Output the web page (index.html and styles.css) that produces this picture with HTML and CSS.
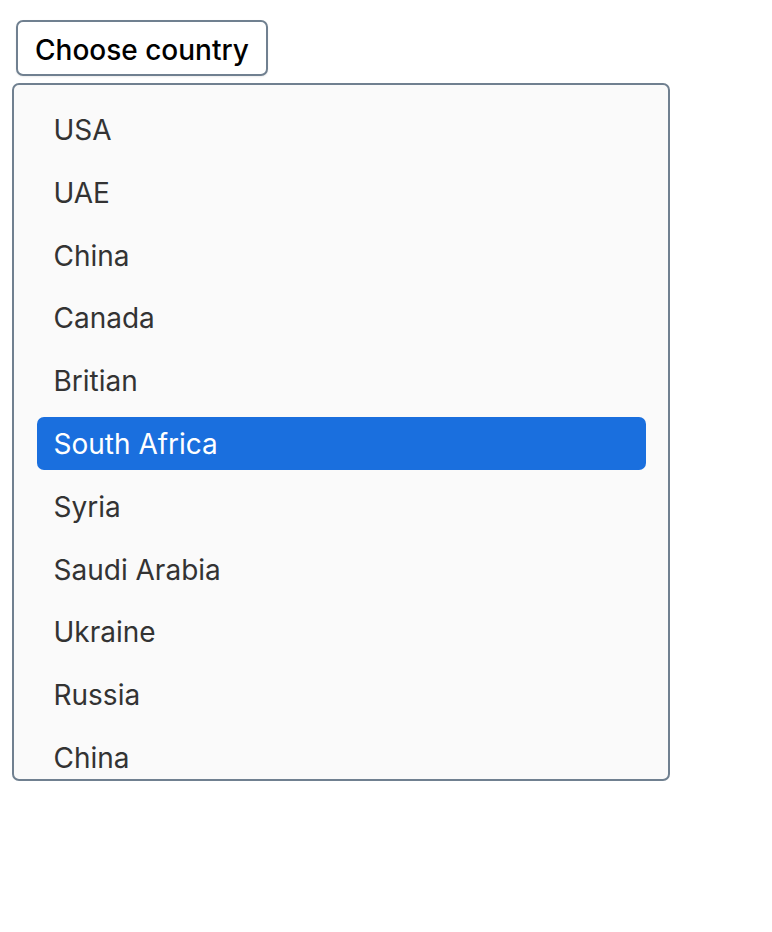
FILE: index.html
```html
<!DOCTYPE html>
<html lang="en">

<head>
    <meta charset="UTF-8">
    <meta name="viewport" content="width=device-width, initial-scale=1.0">
    <title>Choose country</title>
    <link rel="stylesheet" href="styles.css">
</head>

<body>
    <div class="picker">
        <button class="toggle" type="button">Choose country</button>
        <ul class="options">
            <li>USA</li>
            <li>UAE</li>
            <li>China</li>
            <li>Canada</li>
            <li>Britian</li>
            <li class="selected">South Africa</li>
            <li>Syria</li>
            <li>Saudi Arabia</li>
            <li>Ukraine</li>
            <li>Russia</li>
            <li>China</li>
        </ul>
    </div>
</body>

</html>
```

FILE: styles.css
```css
body {
    margin: 0;
    font-family: Inter, 'Noto Sans', sans-serif;
    background: #fff;
}

.picker {
    padding: 20px 0 0 12px;
}

.toggle {
    display: block;
    margin-left: 4px;
    height: 56px;
    padding: 3px 17px 0;
    font-family: Inter, 'Noto Sans', sans-serif;
    font-size: 28px;
    font-weight: 500;
    color: #000;
    background: #fff;
    border: 2px solid #708090;
    border-radius: 7px;
    box-shadow: 0 1px 2px rgba(0, 0, 0, 0.08);
}

.options {
    list-style: none;
    box-sizing: border-box;
    width: 658px;
    height: 698px;
    margin: 7px 0 0;
    padding: 18px 22.5px;
    background: #fafafa;
    border: 2.5px solid #708090;
    border-radius: 7px;
    overflow: hidden;
}

.options li {
    height: 53px;
    line-height: 54px;
    margin-bottom: 9.8px;
    padding: 0 17px;
    font-size: 28px;
    color: #333;
    border-radius: 7px;
}

.options li.selected {
    background: #1a6fde;
    color: #fff;
}
```
